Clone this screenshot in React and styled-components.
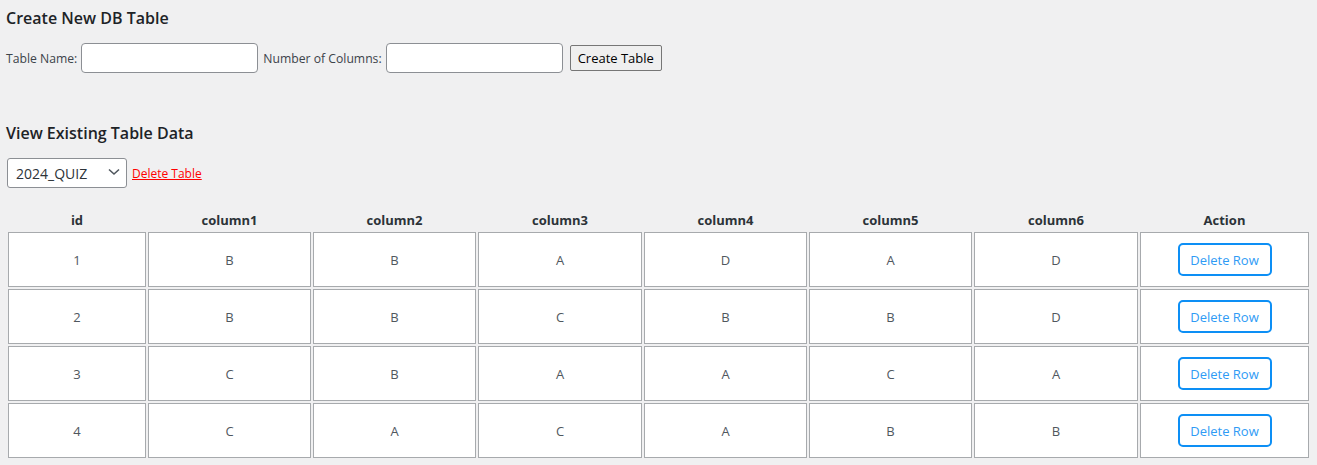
import React from "react";
import styled, { createGlobalStyle } from "styled-components";

const Global = createGlobalStyle`
  html, body { margin: 0; padding: 0; background: #f0f0f1; }
  body { font-family: "Open Sans", "Noto Sans", sans-serif; color: #3c434a; font-size: 13px; }
`;

const Wrap = styled.div`
  padding: 0 6px;
`;

const Heading = styled.h2`
  margin: ${(p) => p.$top}px 0 0;
  font-size: 16px;
  line-height: 22px;
  font-weight: 600;
  color: #1d2327;
`;

const FormRow = styled.div`
  display: flex;
  align-items: center;
  margin-top: 14px;
  height: 30px;
`;

const Label = styled.label`
  font-size: 12.2px;
  color: #3c434a;
  margin-right: 4px;
`;

const TextInput = styled.input`
  box-sizing: border-box;
  width: 177px;
  height: 30px;
  border: 1px solid #8c8f94;
  border-radius: 4px;
  background: #fff;
  margin-right: 5px;
  padding: 0 8px;
`;

const PlainButton = styled.button`
  box-sizing: border-box;
  height: 26px;
  padding: 0 7px;
  margin-left: 2px;
  font-family: inherit;
  font-size: 13px;
  color: #000;
  background: #efefef;
  border: 1px solid #767676;
  border-radius: 2px;
`;

const ControlRow = styled.div`
  display: flex;
  align-items: center;
  margin-top: 14px;
`;

const SelectBox = styled.span`
  position: relative;
  display: inline-block;
  margin-left: 1px;
`;

const Select = styled.select`
  appearance: none;
  box-sizing: border-box;
  width: 120px;
  height: 30px;
  padding: 0 24px 0 8px;
  font-family: inherit;
  font-size: 14px;
  color: #2c3338;
  background: #fff;
  border: 1px solid #8c8f94;
  border-radius: 3px;
`;

const Chevron = styled.svg`
  position: absolute;
  right: 7px;
  top: 10px;
  pointer-events: none;
`;

const DangerLink = styled.a`
  margin-left: 5px;
  font-size: 12px;
  color: #ff0000;
  text-decoration: underline;
  cursor: pointer;
`;

const Table = styled.table`
  width: 100%;
  margin-top: 20px;
  border-collapse: separate;
  border-spacing: 2px;
  table-layout: fixed;
`;

const Th = styled.th`
  height: 20px;
  padding: 0;
  font-size: 13px;
  font-weight: 700;
  color: #2c3338;
  text-align: center;
  width: ${(p) => (p.$w ? `${p.$w}px` : "auto")};
`;

const Td = styled.td`
  box-sizing: border-box;
  height: 55px;
  padding: 0;
  background: #fff;
  border: 1px solid #a7aaad;
  text-align: center;
  font-size: 13px;
  color: #50575e;
`;

const RowButton = styled.button`
  box-sizing: border-box;
  width: 94px;
  height: 33px;
  font-family: inherit;
  font-size: 13px;
  color: #2f9bf5;
  background: #fff;
  border: 2px solid #0d8ff5;
  border-radius: 5px;
  cursor: pointer;
`;

const widths = [138, 163, 163, 164, 163, 163, 164];
const headers = ["id", "column1", "column2", "column3", "column4", "column5", "column6"];
const rows = [
  ["1", "B", "B", "A", "D", "A", "D"],
  ["2", "B", "B", "C", "B", "B", "D"],
  ["3", "C", "B", "A", "A", "C", "A"],
  ["4", "C", "A", "C", "A", "B", "B"],
];

export default function App() {
  return (
    <>
      <Global />
      <Wrap>
        <Heading $top={7}>Create New DB Table</Heading>
        <FormRow>
          <Label>Table Name:</Label>
          <TextInput type="text" />
          <Label>Number of Columns:</Label>
          <TextInput type="text" />
          <PlainButton>Create Table</PlainButton>
        </FormRow>
        <Heading $top={49}>View Existing Table Data</Heading>
        <ControlRow>
          <SelectBox>
            <Select defaultValue="2024_QUIZ">
              <option>2024_QUIZ</option>
            </Select>
            <Chevron width="12" height="8" viewBox="0 0 12 8">
              <path d="M1 1.5 L6 6 L11 1.5" fill="none" stroke="#50575e" strokeWidth="1.6" />
            </Chevron>
          </SelectBox>
          <DangerLink>Delete Table</DangerLink>
        </ControlRow>
        <Table>
          <thead>
            <tr>
              {headers.map((h, i) => (
                <Th key={h} $w={widths[i]}>{h}</Th>
              ))}
              <Th>Action</Th>
            </tr>
          </thead>
          <tbody>
            {rows.map((r) => (
              <tr key={r[0]}>
                {r.map((c, i) => (
                  <Td key={i}>{c}</Td>
                ))}
                <Td>
                  <RowButton>Delete Row</RowButton>
                </Td>
              </tr>
            ))}
          </tbody>
        </Table>
      </Wrap>
    </>
  );
}
